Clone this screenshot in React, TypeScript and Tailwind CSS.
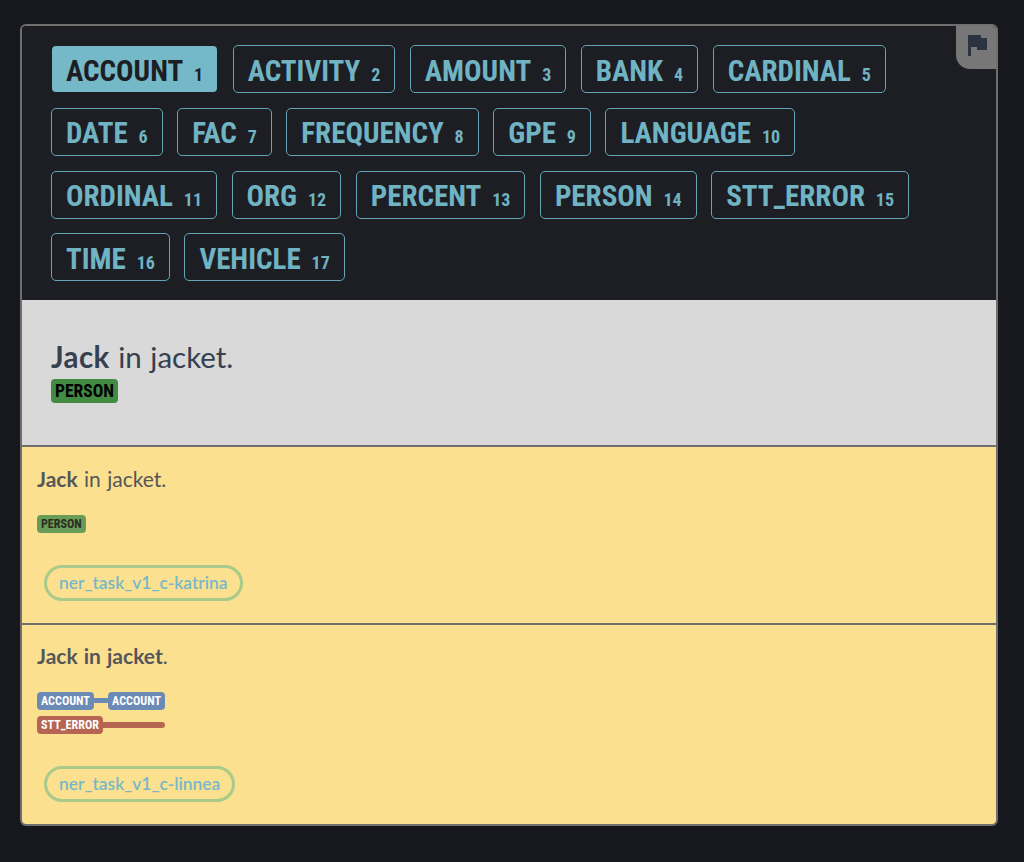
import React from "react";

const labels = [
  "ACCOUNT", "ACTIVITY", "AMOUNT", "BANK", "CARDINAL",
  "DATE", "FAC", "FREQUENCY", "GPE", "LANGUAGE",
  "ORDINAL", "ORG", "PERCENT", "PERSON", "STT_ERROR",
  "TIME", "VEHICLE",
];

const LabelButton = ({ label, index }: { label: string; index: number }) => (
  <button
    className={
      "flex h-12 items-center rounded-[5px] border px-[14px] pt-[4px] font-bold font-['Roboto'] [font-stretch:75%] " +
      (index === 1
        ? "border-transparent bg-[#75b8c8] bg-clip-padding text-[#1c1e24]"
        : "border-[#62a7b6] text-[#70b3c3]")
    }
  >
    <span className="text-[29px] leading-none">{label}</span>
    <span className="ml-[10.9px] mt-[7px] text-[18px] leading-none">{index}</span>
  </button>
);

const Tag = ({ text, className }: { text: string; className: string }) => (
  <span
    className={
      "flex h-[18px] items-center rounded-[4px] px-1 text-[12.1px] font-bold font-['Roboto'] [font-stretch:75%] leading-none " +
      className
    }
  >
    {text}
  </span>
);

const UserPill = ({ name }: { name: string }) => (
  <span className="inline-block h-9 rounded-full border-[3px] border-[#a9ca8a] px-[12px] text-[17.4px] font-semibold leading-[30px] text-[#76b8ca]">
    {name}
  </span>
);

export default function App() {
  return (
    <div className="min-h-[862px] bg-[#17181d] px-5 pt-6 font-['Lato',sans-serif]">
      <div className="relative w-[978px] overflow-hidden rounded-[6px] border-2 border-[#6f6f6f]">
        <div className="absolute right-0 top-0 flex h-[43px] w-10 items-center justify-center rounded-bl-[14px] bg-[#777777]">
          <svg width="19" height="21" viewBox="0 0 19 21" className="mb-[5px] ml-[2px] fill-[#2c3340]">
            <path d="M0 0h13v3h6v12H9v-3H3v9H0z" />
          </svg>
        </div>

        <div className="flex flex-wrap gap-x-[14.5px] gap-y-[14.8px] bg-[#1c1e24] px-[29px] pb-[18.6px] pt-[19px]">
          {labels.map((label, i) => (
            <LabelButton key={label} label={label} index={i + 1} />
          ))}
        </div>

        <div className="h-[147px] border-b-2 border-[#6f6f6f] bg-[#d9d9d9] px-[29px] pt-[39px] text-[29.5px] leading-[36px] text-[#354050] [word-spacing:1px]">
          <div>
            <b className="tracking-[0.4px]">Jack</b> in jacket.
          </div>
          <span className="mt-[4px] flex h-6 w-[67px] items-center justify-center rounded-[4px] bg-[#438a43] pt-[1px] text-[17.5px] font-bold font-['Roboto'] [font-stretch:75%] leading-none text-black [word-spacing:0]">
            PERSON
          </span>
        </div>

        <div className="h-[178px] border-b-2 border-[#6f6f6f] bg-[#fbe08f] px-[15px] pt-[20px]">
          <div className="text-[21px] leading-6 text-[#55565a] [word-spacing:1px]">
            <b>Jack</b> in jacket.
          </div>
          <div className="mt-[24px] flex">
            <Tag text="PERSON" className="bg-[#689c57] text-[#2c2c20]" />
          </div>
          <div className="mt-[32px] pl-[7px]">
            <UserPill name="ner_task_v1_c-katrina" />
          </div>
        </div>

        <div className="h-[199px] bg-[#fbe08f] px-[15px] pt-[19px]">
          <div className="text-[21px] leading-6 text-[#55565a] [word-spacing:1px]">
            <b>Jack in jacket</b>.
          </div>
          <div className="mt-[24px] flex w-[128px] flex-col gap-[6px]">
            <div className="flex items-center">
              <Tag text="ACCOUNT" className="bg-[#6b8ab5] text-white" />
              <div className="h-[5px] flex-1 bg-[#6b8ab5]" />
              <Tag text="ACCOUNT" className="bg-[#6b8ab5] text-white" />
            </div>
            <div className="flex items-center">
              <Tag text="STT_ERROR" className="bg-[#b56552] text-white" />
              <div className="h-[6px] flex-1 rounded-r-full bg-[#b56552]" />
            </div>
          </div>
          <div className="mt-[32px] pl-[7px]">
            <UserPill name="ner_task_v1_c-linnea" />
          </div>
        </div>
      </div>
    </div>
  );
}
